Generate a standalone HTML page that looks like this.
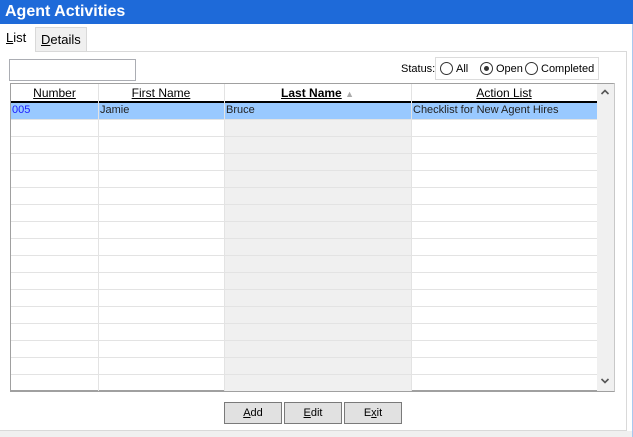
<!DOCTYPE html>
<html><head><style>
body{margin:0;width:633px;height:437px;background:#fff;position:relative;overflow:hidden;font-family:"Liberation Sans",sans-serif;}
.a{position:absolute;box-sizing:border-box}
.title{left:0;top:0;width:633px;height:24px;background:#1e6ad9;color:#fff;font-weight:bold;font-size:16px;padding:3px 0 0 5px}
u{text-decoration:underline}
.btn{top:402px;width:58px;height:22px;border:1px solid #7a7a7a;background:#e1e1e1;font-size:11px;text-align:center;line-height:20px}
.rad{width:13px;height:13px;border:1px solid #333;border-radius:50%;top:62px;background:#fff}
.hd{top:84px;height:18px;font-size:12px;text-align:center;line-height:18px}
</style></head><body>
<div class="a title">Agent Activities</div>
<div class="a" style="left:632px;top:24px;width:1px;height:413px;background:#a9c8ee"></div>
<div class="a" style="left:0;top:51px;width:627px;height:380px;border:1px solid #d9d9d9;border-left:none"></div>
<div class="a" style="left:0;top:431px;width:632px;height:6px;background:#f0f0f0"></div>
<div class="a" style="left:0;top:25px;width:35px;height:27px;background:#fff;font-size:13px;padding:5px 0 0 6px"><u>L</u>ist</div>
<div class="a" style="left:35px;top:27px;width:52px;height:24px;background:#f0f0f0;border:1px solid #d9d9d9;border-bottom:none;font-size:13px;padding:4px 0 0 5px"><u>D</u>etails</div>
<div class="a" style="left:9px;top:59px;width:127px;height:22px;border:1px solid #abadb3"></div>
<div class="a" style="left:435px;top:57px;width:164px;height:23px;border:1px solid #dcdcdc"></div>
<div class="a" style="left:401px;top:63px;font-size:11px">Status:</div>
<div class="a rad" style="left:440px"></div><div class="a" style="left:456px;top:63px;font-size:11px">All</div>
<div class="a rad" style="left:480px"></div><div class="a" style="left:484px;top:66px;width:5px;height:5px;border-radius:50%;background:#333"></div>
<div class="a" style="left:496px;top:63px;font-size:11px">Open</div>
<div class="a rad" style="left:525px"></div><div class="a" style="left:541px;top:63px;font-size:11px">Completed</div>
<div class="a" style="left:10px;top:83px;width:605px;height:309px;border:1px solid #a0a0a0;border-bottom:2px solid #a0a0a0;border-right:2px solid #c8c8c8"></div>
<div class="a" style="left:224px;top:103px;width:187px;height:288px;background:#f0f0f0"></div>
<div class="a" style="left:11px;top:119px;width:586px;height:272px;background:repeating-linear-gradient(to bottom,#e3e3e3 0,#e3e3e3 1px,transparent 1px,transparent 17px)"></div>
<div class="a" style="left:11px;top:101px;width:586px;height:2px;background:#000"></div>
<div class="a" style="left:11px;top:103px;width:586px;height:16px;background:#99c9ff"></div>
<div class="a" style="left:98px;top:84px;width:1px;height:307px;background:#e3e3e3"></div>
<div class="a" style="left:224px;top:84px;width:1px;height:307px;background:#e3e3e3"></div>
<div class="a" style="left:411px;top:84px;width:1px;height:307px;background:#e3e3e3"></div>
<div class="a" style="left:597px;top:84px;width:17px;height:307px;background:#f0f0f0"></div>
<svg class="a" style="left:600px;top:88px" width="10" height="8"><path d="M1.5 6 L5 2.5 L8.5 6" stroke="#555" stroke-width="1.6" fill="none"/></svg>
<svg class="a" style="left:600px;top:377px" width="10" height="8"><path d="M1.5 2 L5 5.5 L8.5 2" stroke="#555" stroke-width="1.6" fill="none"/></svg>
<div class="a hd" style="left:11px;width:87px"><u>Number</u></div>
<div class="a hd" style="left:98px;width:126px"><u>First Name</u></div>
<div class="a hd" style="left:224px;width:187px;font-weight:bold"><u>Last Name</u> <span style="color:#aaa;font-size:9px">&#9650;</span></div>
<div class="a hd" style="left:411px;width:186px"><u>Action List</u></div>
<div class="a" style="left:12px;top:104px;font-size:11px;color:#1a1aff">005</div>
<div class="a" style="left:100px;top:104px;font-size:11px;color:#222">Jamie</div>
<div class="a" style="left:226px;top:104px;font-size:11px;color:#222">Bruce</div>
<div class="a" style="left:413px;top:104px;font-size:11px;color:#222">Checklist for New Agent Hires</div>
<div class="a btn" style="left:224px"><u>A</u>dd</div>
<div class="a btn" style="left:284px"><u>E</u>dit</div>
<div class="a btn" style="left:344px">E<u>x</u>it</div>
</body></html>
